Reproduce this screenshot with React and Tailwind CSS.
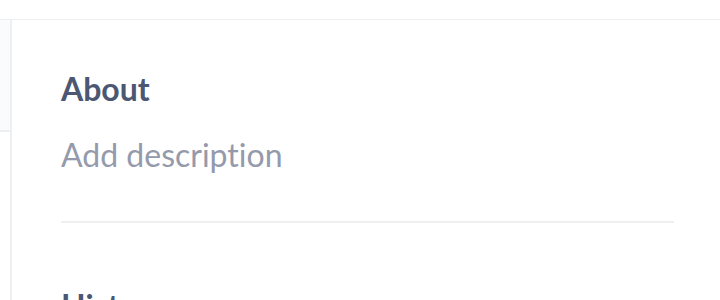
import React from 'react';

const App = () => {
  return (
    <div className="h-[300px] w-[720px] overflow-hidden bg-white font-['Lato','Liberation_Sans',sans-serif] [font-variant-ligatures:none]">
      {/* Top bar */}
      <div className="h-[20px] border-b border-[#eeeff0] bg-white" />

      <div className="flex h-[280px]">
        {/* Sidebar sliver */}
        <div className="w-[12px] shrink-0 border-r-2 border-[#eeeff0]">
          <div className="h-[112px] border-b-2 border-[#eeeff0] bg-[#f9fbfc]" />
        </div>

        {/* Main */}
        <main className="flex-1 pl-[49px] pr-[46px] pt-[49px]">
          <section className="border-b-2 border-[#eeeff0] pb-[46px]">
            <h2 className="text-[32px] font-bold leading-[40px] text-[#4c5773]">About</h2>
            <p className="mt-[26px] text-[32px] leading-[40px] text-[#949aab]">Add description</p>
          </section>
          <section className="pt-[63px]">
            <h2 className="text-[32px] font-bold leading-[40px] text-[#4c5773]">History</h2>
          </section>
        </main>
      </div>
    </div>
  );
};

export default App;
